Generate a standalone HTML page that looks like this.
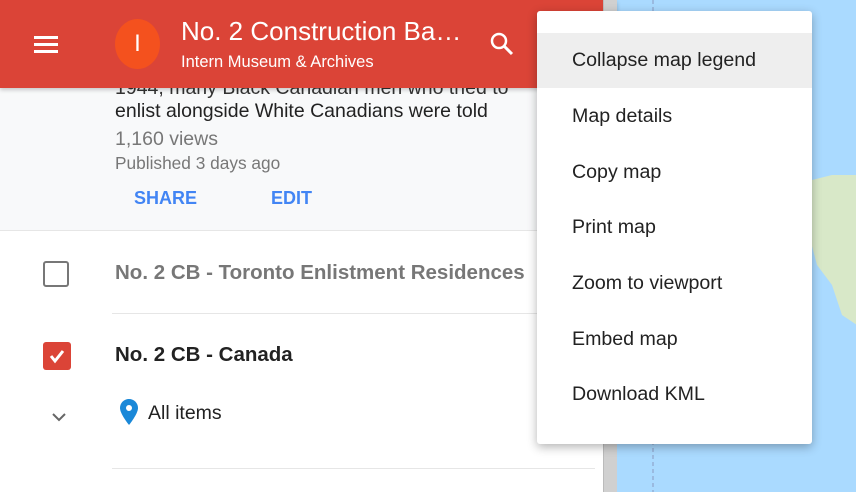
<!DOCTYPE html>
<html><head><style>
body{margin:0;width:856px;height:492px;overflow:hidden;position:relative;font-family:"Liberation Sans",sans-serif;background:#aadaff}
.abs{position:absolute}
.side{left:0;top:0;width:603px;height:492px;background:#fff}
.scroll{left:603px;top:0;width:14px;height:492px;background:#d0d0d0;border-left:1px solid #bbb;box-sizing:border-box}
.top{left:0;top:88px;width:603px;height:142px;background:#f8f9fa;border-bottom:1px solid #e6e6e6}
.hdr{left:0;top:0;width:617px;height:88px;background:#db4437;box-shadow:0 2px 4px rgba(0,0,0,.2)}
.t{color:#222;font-size:19.5px;white-space:nowrap}
.menu{left:537px;top:11px;width:275px;height:433px;background:#fff;border-radius:3px;box-shadow:0 3px 10px rgba(0,0,0,.3)}
.mi{position:absolute;left:35px;font-size:19.6px;color:#222;white-space:nowrap}
</style></head><body>
<div class="abs side"></div>
<div class="abs top"></div>
<div class="abs t" style="left:115px;top:77px;color:#333">1944, many Black Canadian men who tried to</div>
<div class="abs t" style="left:115px;top:100px">enlist alongside White Canadians were told</div>
<div class="abs t" style="left:115px;top:128px;color:#777">1,160 views</div>
<div class="abs" style="left:115px;top:153px;font-size:17.3px;color:#777">Published 3 days ago</div>
<div class="abs" style="left:134px;top:188px;font-size:18px;font-weight:bold;color:#4285f4">SHARE</div>
<div class="abs" style="left:271px;top:188px;font-size:18px;font-weight:bold;color:#4285f4">EDIT</div>
<div class="abs hdr"></div>
<div class="abs" style="left:34px;top:36px;width:24px;height:3px;background:#fff;box-shadow:0 7px 0 #fff,0 14px 0 #fff"></div>
<div class="abs" style="left:115px;top:19px;width:45px;height:50px;border-radius:50%;background:#f4511e;color:#fff;font-size:24px;text-align:center;line-height:50px">I</div>
<div class="abs" style="left:181px;top:16px;font-size:26px;color:#fff;white-space:nowrap">No. 2 Construction Ba…</div>
<div class="abs" style="left:181px;top:53px;font-size:16.5px;color:#fff;white-space:nowrap">Intern Museum &amp; Archives</div>
<svg class="abs" style="left:488px;top:30px" width="28" height="28" viewBox="0 0 28 28"><circle cx="11" cy="11" r="7" fill="none" stroke="#fff" stroke-width="2.5"/><path d="M16 16l8 8" stroke="#fff" stroke-width="3"/></svg>
<div class="abs" style="left:43px;top:261px;width:26px;height:26px;border:2px solid #777;border-radius:3px;box-sizing:border-box"></div>
<div class="abs t" style="left:115px;top:261px;color:#777;font-weight:bold;font-size:20.5px">No. 2 CB - Toronto Enlistment Residences</div>
<div class="abs" style="left:112px;top:313px;width:483px;height:1px;background:#e6e6e6"></div>
<div class="abs" style="left:43px;top:342px;width:28px;height:28px;background:#db4437;border-radius:3px"></div>
<svg class="abs" style="left:43px;top:342px" width="28" height="28"><path d="M8 14l4 5 8-10" stroke="#fff" stroke-width="3" fill="none"/></svg>
<div class="abs t" style="left:115px;top:343px;font-weight:bold;font-size:20.5px">No. 2 CB - Canada</div>
<svg class="abs" style="left:51px;top:412px" width="16" height="12"><path d="M2 2l6 6 6-6" stroke="#666" stroke-width="2" fill="none"/></svg>
<svg class="abs" style="left:119px;top:398px" width="20" height="28" viewBox="0 0 20 28"><path d="M10 1C5 1 1 5 1 10c0 6 9 17 9 17s9-11 9-17c0-5-4-9-9-9z" fill="#1a88d8"/><circle cx="10" cy="10" r="3" fill="#fff"/></svg>
<div class="abs t" style="left:148px;top:402px">All items</div>
<div class="abs" style="left:112px;top:468px;width:483px;height:1px;background:#e6e6e6"></div>
<div class="abs scroll"></div>
<svg class="abs" style="left:617px;top:0" width="239" height="492"><path d="M195 180l20-5 25 0 0 150-15-10-10-30-15-20-8-30z" fill="#d8e8c8"/><path d="M36 0v492" stroke="#8a9ac0" stroke-dasharray="4 3" stroke-width="1"/></svg>
<div class="abs menu">
<div class="abs" style="left:0;top:22px;width:275px;height:55px;background:#eee"></div>
<div class="mi" style="top:38px">Collapse map legend</div>
<div class="mi" style="top:94px">Map details</div>
<div class="mi" style="top:150px">Copy map</div>
<div class="mi" style="top:205px">Print map</div>
<div class="mi" style="top:261px">Zoom to viewport</div>
<div class="mi" style="top:317px">Embed map</div>
<div class="mi" style="top:372px">Download KML</div>
</div>
</body></html>
